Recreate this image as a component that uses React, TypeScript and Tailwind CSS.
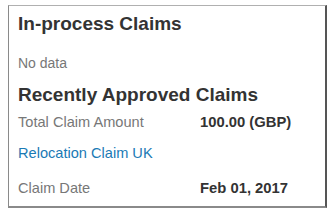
export default function App() {
  return (
    <div className="w-[335px] h-[218px] bg-white pt-[5px] pl-[8px]" style={{ fontFamily: '"Liberation Sans", Arial, sans-serif' }}>
      <div className="w-[319px] h-[203px] border-l border-t border-l-[#8a8a8a] border-t-[#b0b0b0] border-r-2 border-b-2 border-r-[#555] border-b-[#8a8a8a] pl-[9px] pt-[7px]">
        <h2 className="text-[19px] leading-[22px] font-bold text-[#333]">In-process Claims</h2>
        <p className="mt-[20px] text-[14px] leading-[16px] text-[#777]">No data</p>
        <h2 className="mt-[13px] text-[19px] leading-[22px] font-bold text-[#333]">Recently Approved Claims</h2>
        <div className="grid grid-cols-[182px_1fr] text-[14.6px] leading-[18px] mt-[7px]">
          <span className="text-[#777]">Total Claim Amount</span>
          <span className="font-bold text-[#333] text-[14.8px]">100.00 (GBP)</span>
        </div>
        <p className="mt-[13px] text-[14.6px] leading-[18px] text-[#1a7ab5]">Relocation Claim UK</p>
        <div className="grid grid-cols-[182px_1fr] text-[14.6px] leading-[18px] mt-[17px]">
          <span className="text-[#777]">Claim Date</span>
          <span className="font-bold text-[#333] text-[14.8px]">Feb 01, 2017</span>
        </div>
      </div>
    </div>
  );
}
